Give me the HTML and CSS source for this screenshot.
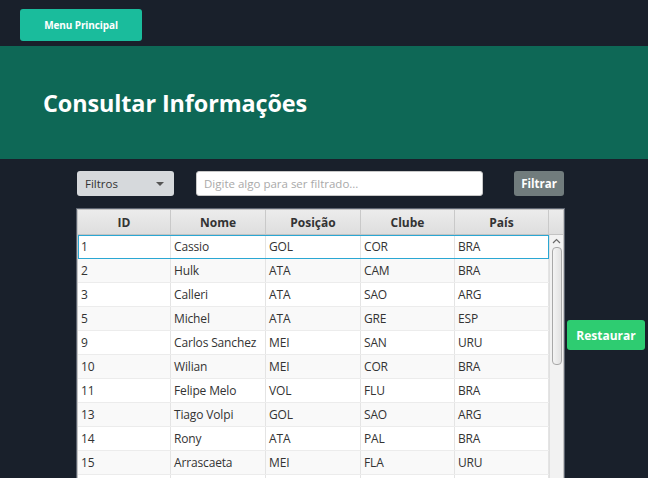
FILE: index.html
```html
<!DOCTYPE html>
<html lang="pt">
<head>
<meta charset="utf-8">
<link rel="stylesheet" href="styles.css">
</head>
<body>
<div class="topbar">
  <button class="btn-menu">Menu Principal</button>
</div>
<div class="banner">
  <h1 class="title">Consultar Informações</h1>
</div>
<div class="main">
  <div class="controls">
    <div class="combo"><span>Filtros</span><span class="arrow"></span></div>
    <div class="field">Digite algo para ser filtrado...</div>
    <button class="btn-filtrar">Filtrar</button>
  </div>
  <div class="table-row">
    <div class="table">
      <div class="thead">
        <div class="th">ID</div>
        <div class="th">Nome</div>
        <div class="th">Posição</div>
        <div class="th">Clube</div>
        <div class="th">País</div>
        <div class="th corner"></div>
      </div>
      <div class="tbody-wrap">
        <div class="tbody">
          <div class="tr selected"><div class="td">1</div><div class="td">Cassio</div><div class="td">GOL</div><div class="td">COR</div><div class="td">BRA</div></div>
          <div class="tr"><div class="td">2</div><div class="td">Hulk</div><div class="td">ATA</div><div class="td">CAM</div><div class="td">BRA</div></div>
          <div class="tr"><div class="td">3</div><div class="td">Calleri</div><div class="td">ATA</div><div class="td">SAO</div><div class="td">ARG</div></div>
          <div class="tr"><div class="td">5</div><div class="td">Michel</div><div class="td">ATA</div><div class="td">GRE</div><div class="td">ESP</div></div>
          <div class="tr"><div class="td">9</div><div class="td">Carlos Sanchez</div><div class="td">MEI</div><div class="td">SAN</div><div class="td">URU</div></div>
          <div class="tr"><div class="td">10</div><div class="td">Wilian</div><div class="td">MEI</div><div class="td">COR</div><div class="td">BRA</div></div>
          <div class="tr"><div class="td">11</div><div class="td">Felipe Melo</div><div class="td">VOL</div><div class="td">FLU</div><div class="td">BRA</div></div>
          <div class="tr"><div class="td">13</div><div class="td">Tiago Volpi</div><div class="td">GOL</div><div class="td">SAO</div><div class="td">ARG</div></div>
          <div class="tr"><div class="td">14</div><div class="td">Rony</div><div class="td">ATA</div><div class="td">PAL</div><div class="td">BRA</div></div>
          <div class="tr"><div class="td">15</div><div class="td">Arrascaeta</div><div class="td">MEI</div><div class="td">FLA</div><div class="td">URU</div></div>
          <div class="tr"><div class="td"></div><div class="td"></div><div class="td"></div><div class="td"></div><div class="td"></div></div>
        </div>
        <div class="scrollbar">
          <div class="scroll-up"><svg width="9" height="6" viewBox="0 0 9 6"><path d="M1 5 L4.5 1.5 L8 5" fill="none" stroke="#6a6a6a" stroke-width="1.2"/></svg></div>
          <div class="thumb"></div>
        </div>
      </div>
    </div>
    <button class="btn-restaurar">Restaurar</button>
  </div>
</div>
</body>
</html>
```

FILE: styles.css
```css
* { box-sizing: border-box; }
html, body { margin: 0; padding: 0; }
body {
  width: 648px;
  height: 478px;
  overflow: hidden;
  background: #19202b;
  font-family: "Open Sans", "Noto Sans", sans-serif;
}
button { font-family: inherit; border: none; cursor: pointer; padding: 0; }

.topbar {
  height: 46px;
  padding: 9px 0 0 20px;
}
.btn-menu {
  width: 122px;
  height: 32px;
  background: #1abc9c;
  color: #fff;
  font-weight: 700;
  font-size: 10px;
  border-radius: 3px;
  letter-spacing: -0.1px;
}

.banner {
  height: 113px;
  background: #0e6856;
  display: flex;
  align-items: center;
  padding-left: 43px;
}
.title {
  margin: 0;
  color: #fff;
  font-size: 23.4px;
  font-weight: 700;
  letter-spacing: -0.1px;
  padding-bottom: 0;
}

.main {
  padding: 12px 0 0 76px;
}
.controls {
  display: flex;
  align-items: center;
  height: 25px;
  margin-left: 1px;
}
.combo {
  width: 97px;
  height: 25px;
  background: #d6d9dc;
  border-radius: 3px;
  display: flex;
  align-items: center;
  justify-content: space-between;
  padding: 0 8px 0 8px;
  font-size: 11.5px;
  color: #333;
}
.arrow {
  width: 0; height: 0;
  border-left: 4px solid transparent;
  border-right: 4px solid transparent;
  border-top: 4px solid #555;
  margin-right: 2px;
}
.field {
  margin-left: 22px;
  width: 287px;
  height: 25px;
  background: #fff;
  border-radius: 3px;
  border: 1px solid #c8c8c8;
  display: flex;
  align-items: center;
  padding-left: 7px;
  font-size: 11.5px;
  color: #a9a9a9;
}
.btn-filtrar {
  margin-left: 31px;
  width: 50px;
  height: 25px;
  background: #717c7d;
  color: #fff;
  font-weight: 700;
  font-size: 11.5px;
  border-radius: 3px;
}

.table-row {
  display: flex;
  align-items: flex-start;
  margin-top: 12px;
}
.table {
  width: 489px;
  height: 290px;
  border: 1px solid #5d6470;
  border-bottom: none;
  background: #c4c4c4;
  padding: 1px 1px 0 1px;
}
.thead {
  display: grid;
  grid-template-columns: 93px 95px 95px 94px 94px 14px;
  height: 25px;
  background: linear-gradient(#ececec, #dedede);
  border-bottom: 1px solid #c3c3c3;
}
.th {
  display: flex;
  align-items: center;
  justify-content: center;
  font-size: 12px;
  font-weight: 700;
  color: #333;
  border-right: 1px solid #c9c9c9;
}
.th.corner { border-right: none; }

.tbody-wrap {
  display: flex;
  height: 264px;
  background: #fff;
}
.tbody {
  width: 471px;
  overflow: hidden;
}
.tr {
  display: grid;
  grid-template-columns: 93px 95px 95px 94px 94px;
  height: 24px;
  background: #fff;
  border-bottom: 1px solid #ececec;
}
.tr:nth-child(even) { background: #f9f9f9; }
.tr.selected { outline: 1px solid #2aa7d3; outline-offset: -1px; }
.td {
  display: flex;
  align-items: center;
  padding-left: 3px;
  font-size: 12px;
  letter-spacing: -0.15px;
  color: #333;
  border-right: 1px solid #e4e4e4;
}

.scrollbar {
  width: 14px;
  background: #f2f2f2;
  border-left: 1px solid #e0e0e0;
}
.scroll-up {
  height: 12px;
  display: flex;
  align-items: center;
  justify-content: center;
}
.thumb {
  margin: 0 auto;
  width: 10px;
  height: 118px;
  border: 1px solid #a8a8a8;
  border-radius: 4px;
  background: linear-gradient(90deg, #f4f4f4, #e2e2e2);
}

.btn-restaurar {
  margin-left: 2px;
  margin-top: 112px;
  width: 78px;
  height: 30px;
  background: #2ecc71;
  color: #fff;
  font-weight: 700;
  font-size: 12px;
  border-radius: 3px;
}
```
